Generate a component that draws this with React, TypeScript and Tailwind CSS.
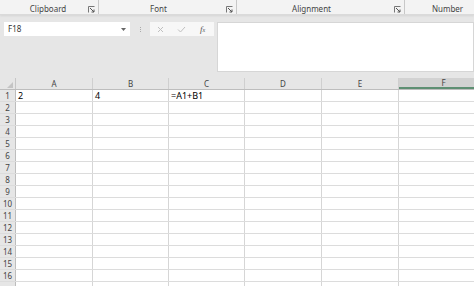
import React from "react";

const cols = [
  { l: "A", w: 77 },
  { l: "B", w: 76 },
  { l: "C", w: 76 },
  { l: "D", w: 77 },
  { l: "E", w: 77 },
  { l: "F", w: 90 },
];

const data: Record<string, string> = { "1A": "2", "1B": "4", "1C": "=A1+B1" };

function Launcher() {
  return (
    <svg width="7" height="7" viewBox="0 0 7 7" className="shrink-0 mb-[1px]">
      <path d="M0.5 6.5V0.5H6.5" fill="none" stroke="#777" strokeWidth="1" />
      <path d="M2 2L6 6M6 3.5V6H3.5" fill="none" stroke="#555" strokeWidth="1" />
    </svg>
  );
}

export default function App() {
  const font = { fontFamily: '"Noto Sans", "Open Sans", Arial, sans-serif' };
  return (
    <div className="w-[474px] h-[286px] overflow-hidden bg-white" style={font}>
      {/* ribbon group labels */}
      <div className="flex h-[15px] bg-[#f3f3f3] border-b border-[#dadada] text-[8px] leading-none text-[#444] shadow-[0_1px_2px_rgba(0,0,0,0.08)] relative z-10">
        <div className="w-[99px] shrink-0 flex items-end border-r border-[#c8c8c8] pr-[3px]">
          <span className="flex-1 text-center pl-[8px] pb-[1px]">Clipboard</span>
          <Launcher />
        </div>
        <div className="w-[138px] shrink-0 flex items-end border-r border-[#c8c8c8] pr-[3px]">
          <span className="flex-1 text-center pr-[8px] pb-[1px]">Font</span>
          <Launcher />
        </div>
        <div className="w-[168px] shrink-0 flex items-end border-r border-[#c8c8c8] pr-[3px]">
          <span className="flex-1 text-center pr-[8px] pb-[1px]">Alignment</span>
          <Launcher />
        </div>
        <div className="flex-1 flex items-end pb-[1px]">
          <span className="flex-1 text-center pl-[16px]">Number</span>
        </div>
      </div>

      {/* formula area */}
      <div className="bg-[#e6e6e6] h-[63px] pt-[7px] flex items-start">
        <div className="ml-[4px] w-[126px] h-[14px] bg-white flex items-center pl-[4px] pr-[4px] text-[8px] text-[#333]">
          <span className="flex-1">F18</span>
          <svg width="5" height="3" viewBox="0 0 5 3"><path d="M0 0H5L2.5 3Z" fill="#666" /></svg>
        </div>
        <div className="w-[20px] h-[14px] flex flex-col items-center justify-center gap-[1px]">
          <div className="w-[1px] h-[1px] bg-[#aaa]" />
          <div className="w-[1px] h-[1px] bg-[#aaa]" />
          <div className="w-[1px] h-[1px] bg-[#aaa]" />
        </div>
        <div className="w-[64px] h-[14px] bg-[#f7f7f7] flex items-center">
          <svg width="7" height="7" viewBox="0 0 7 7" className="ml-[7px] shrink-0"><path d="M1 1L6 6M6 1L1 6" stroke="#c0c0c0" strokeWidth="1" /></svg>
          <svg width="9" height="7" viewBox="0 0 9 7" className="ml-[13px] shrink-0"><path d="M1 3.5L3.5 6L8 1" fill="none" stroke="#c0c0c0" strokeWidth="1" /></svg>
          <span className="ml-[14px] text-[9px] italic text-[#555] leading-none" style={{ fontFamily: '"Liberation Serif", serif' }}>
            f<span className="text-[6px]">x</span>
          </span>
        </div>
        <div className="ml-[3px] flex-1 h-[50px] bg-white border border-[#d6d6d6]" />
      </div>

      {/* grid */}
      <div className="text-[9px]">
        <div className="flex h-[12px] bg-[#e6e6e6] border-b border-[#bdbdbd]">
          <div className="w-[16px] shrink-0 border-r border-[#c6c6c6] flex items-end justify-end pr-[2px] pb-[1px]">
            <svg width="6" height="6" viewBox="0 0 6 6"><path d="M6 0V6H0Z" fill="#c4c4c4" /></svg>
          </div>
          {cols.map((c) => (
            <div
              key={c.l}
              style={{ width: c.w }}
              className={
                "shrink-0 flex items-center justify-center text-[8px] border-r border-[#cfcfcf] " +
                (c.l === "F"
                  ? "bg-[#d2d2d2] border-b-2 border-b-[#5e8f73] text-[#444]"
                  : "text-[#444]")
              }
            >
              {c.l}
            </div>
          ))}
        </div>
        {Array.from({ length: 17 }, (_, i) => i + 1).map((r) => (
          <div key={r} className="flex h-[12px] border-b border-[#dcdcdc]">
            <div className="w-[16px] shrink-0 bg-[#e6e6e6] border-r border-[#bdbdbd] flex items-center justify-center text-[8px] text-[#444] pt-[1px]">
              {r < 17 ? r : ""}
            </div>
            {cols.map((c) => (
              <div
                key={c.l}
                style={{ width: c.w }}
                className="shrink-0 border-r border-[#d6d6d6] flex items-center pl-[2px] text-[9px] text-black leading-none"
              >
                {data[`${r}${c.l}`] ?? ""}
              </div>
            ))}
          </div>
        ))}
      </div>
    </div>
  );
}
